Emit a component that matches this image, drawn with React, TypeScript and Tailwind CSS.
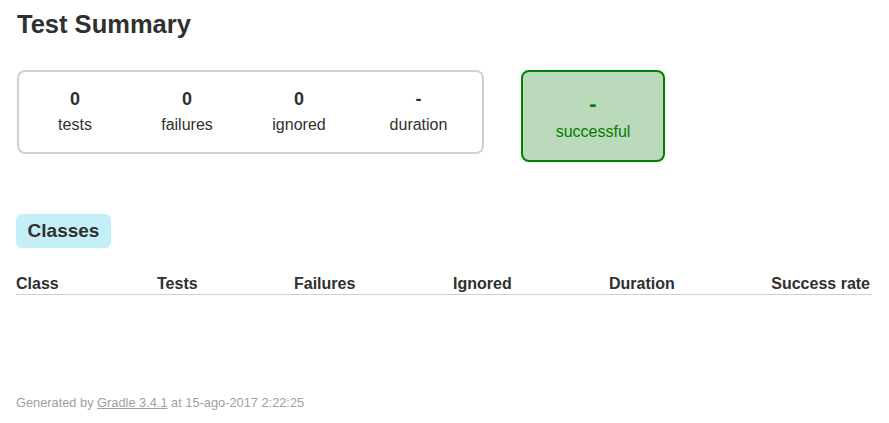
export default function App() {
  const counters = [
    { value: '0', label: 'tests', w: 'w-[112px]' },
    { value: '0', label: 'failures', w: 'w-[112px]' },
    { value: '0', label: 'ignored', w: 'w-[112px]' },
    { value: '-', label: 'duration', w: 'flex-1' },
  ]

  return (
    <div className="min-h-[423px] bg-white px-4 pt-[8px] text-[#303030] font-['Liberation_Sans',Arial,sans-serif]">
      <h1 className="ml-[1px] text-[25.5px] font-bold leading-[32px]">Test Summary</h1>

      <div className="ml-[1px] mt-[30px] flex items-start">
        <div className="flex h-[84px] w-[467px] rounded-[8px] border-2 border-[#d0d0d0]">
          {counters.map((c) => (
            <div key={c.label} className={`${c.w} flex flex-col items-center pt-[15px]`}>
              <div className="text-[18px] font-bold leading-[24px]">{c.value}</div>
              <div className="mt-[4px] text-[16px] leading-[20px]">{c.label}</div>
            </div>
          ))}
        </div>

        <div className="ml-[37px] flex h-[92px] w-[144px] flex-col items-center rounded-[8px] border-2 border-[#008000] bg-[#bbd9bb] pt-[18px] text-[#008000]">
          <div className="text-[22px] font-bold leading-[28px]">-</div>
          <div className="mt-[4px] text-[16px] leading-[20px]">successful</div>
        </div>
      </div>

      <div className="mt-[52px] inline-flex h-[34px] w-[95px] items-center justify-center rounded-[6px] bg-[#c5eff6]">
        <span className="text-[19px] font-bold">Classes</span>
      </div>

      <div className="mt-[26px] flex w-[856px] border-b border-[#d0d0d0] text-[16px] font-bold leading-[20px]">
        <div className="w-[141px]">Class</div>
        <div className="w-[137px]">Tests</div>
        <div className="w-[159px]">Failures</div>
        <div className="w-[156px]">Ignored</div>
        <div className="w-[120px]">Duration</div>
        <div className="flex-1 text-right pr-[2px]">Success rate</div>
      </div>

      <div className="mt-[100px] text-[12.8px] leading-[16px] text-[#a0a0a0]">
        Generated by <a className="underline text-[#a0a0a0]">Gradle 3.4.1</a> at 15-ago-2017 2:22:25
      </div>
    </div>
  )
}
